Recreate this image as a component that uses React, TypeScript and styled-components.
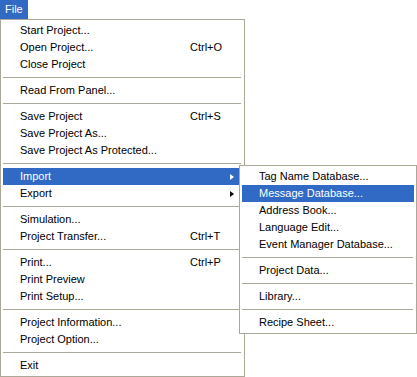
import React from "react";
import styled, { createGlobalStyle } from "styled-components";

type Entry =
  | { label: string; shortcut?: string; arrow?: boolean; active?: boolean; sub?: Entry[] }
  | "sep";

const importMenu: Entry[] = [
  { label: "Tag Name Database..." },
  { label: "Message Database...", active: true },
  { label: "Address Book..." },
  { label: "Language Edit..." },
  { label: "Event Manager Database..." },
  "sep",
  { label: "Project Data..." },
  "sep",
  { label: "Library..." },
  "sep",
  { label: "Recipe Sheet..." },
];

const fileMenu: Entry[] = [
  { label: "Start Project..." },
  { label: "Open Project...", shortcut: "Ctrl+O" },
  { label: "Close Project" },
  "sep",
  { label: "Read From Panel..." },
  "sep",
  { label: "Save Project", shortcut: "Ctrl+S" },
  { label: "Save Project As..." },
  { label: "Save Project As Protected..." },
  "sep",
  { label: "Import", arrow: true, active: true, sub: importMenu },
  { label: "Export", arrow: true },
  "sep",
  { label: "Simulation..." },
  { label: "Project Transfer...", shortcut: "Ctrl+T" },
  "sep",
  { label: "Print...", shortcut: "Ctrl+P" },
  { label: "Print Preview" },
  { label: "Print Setup..." },
  "sep",
  { label: "Project Information..." },
  { label: "Project Option..." },
  "sep",
  { label: "Exit" },
];

const GlobalStyle = createGlobalStyle`
  html, body {
    margin: 0;
    background: #ffffff;
  }
  body {
    font-family: "Liberation Sans", Arial, sans-serif;
    font-size: 11px;
    color: #000000;
  }
`;

const Page = styled.div`
  display: flex;
  flex-direction: column;
  align-items: flex-start;
  width: 417px;
  height: 377px;
`;

const MenuBar = styled.div`
  display: flex;
  height: 19px;
`;

const MenuTitle = styled.div`
  width: 28px;
  height: 19px;
  line-height: 19px;
  padding-left: 5px;
  box-sizing: border-box;
  background: #316ac5;
  color: #ffffff;
`;

const Menu = styled.div<{ $width: number }>`
  width: ${(p) => p.$width}px;
  box-sizing: border-box;
  border: 1px solid #aca899;
  padding: 2px;
  background: #ffffff;
  color: #000000;
`;

const SubMenuLayer = styled.div`
  position: absolute;
  top: -3px;
  left: 236px;
  z-index: 2;
`;

const Item = styled.div<{ $active: boolean }>`
  position: relative;
  display: grid;
  grid-template-columns: 170px 1fr 12px;
  align-items: center;
  height: 17px;
  line-height: 17px;
  padding-left: 17px;
  background: ${(p) => (p.$active ? "#316ac5" : "transparent")};
  color: ${(p) => (p.$active ? "#ffffff" : "#000000")};
  white-space: nowrap;
`;

const Label = styled.span``;

const Shortcut = styled.span``;

const ArrowCell = styled.span`
  display: flex;
  align-items: center;
`;

const Arrow = styled.span<{ $active: boolean }>`
  width: 0;
  height: 0;
  border-top: 3.5px solid transparent;
  border-bottom: 3.5px solid transparent;
  border-left: 4px solid ${(p) => (p.$active ? "#ffffff" : "#000000")};
`;

const Separator = styled.div`
  height: 1px;
  margin: 4px 1px 4px 0;
  background: #aca899;
`;

function MenuList({ entries, width }: { entries: Entry[]; width: number }) {
  return (
    <Menu $width={width}>
      {entries.map((e, i) =>
        e === "sep" ? (
          <Separator key={i} />
        ) : (
          <Item key={i} $active={!!e.active}>
            <Label>{e.label}</Label>
            <Shortcut>{e.shortcut}</Shortcut>
            <ArrowCell>{e.arrow ? <Arrow $active={!!e.active} /> : null}</ArrowCell>
            {e.sub ? (
              <SubMenuLayer>
                <MenuList entries={e.sub} width={178} />
              </SubMenuLayer>
            ) : null}
          </Item>
        )
      )}
    </Menu>
  );
}

export default function App() {
  return (
    <>
      <GlobalStyle />
      <Page>
        <MenuBar>
          <MenuTitle>File</MenuTitle>
        </MenuBar>
        <MenuList entries={fileMenu} width={245} />
      </Page>
    </>
  );
}
